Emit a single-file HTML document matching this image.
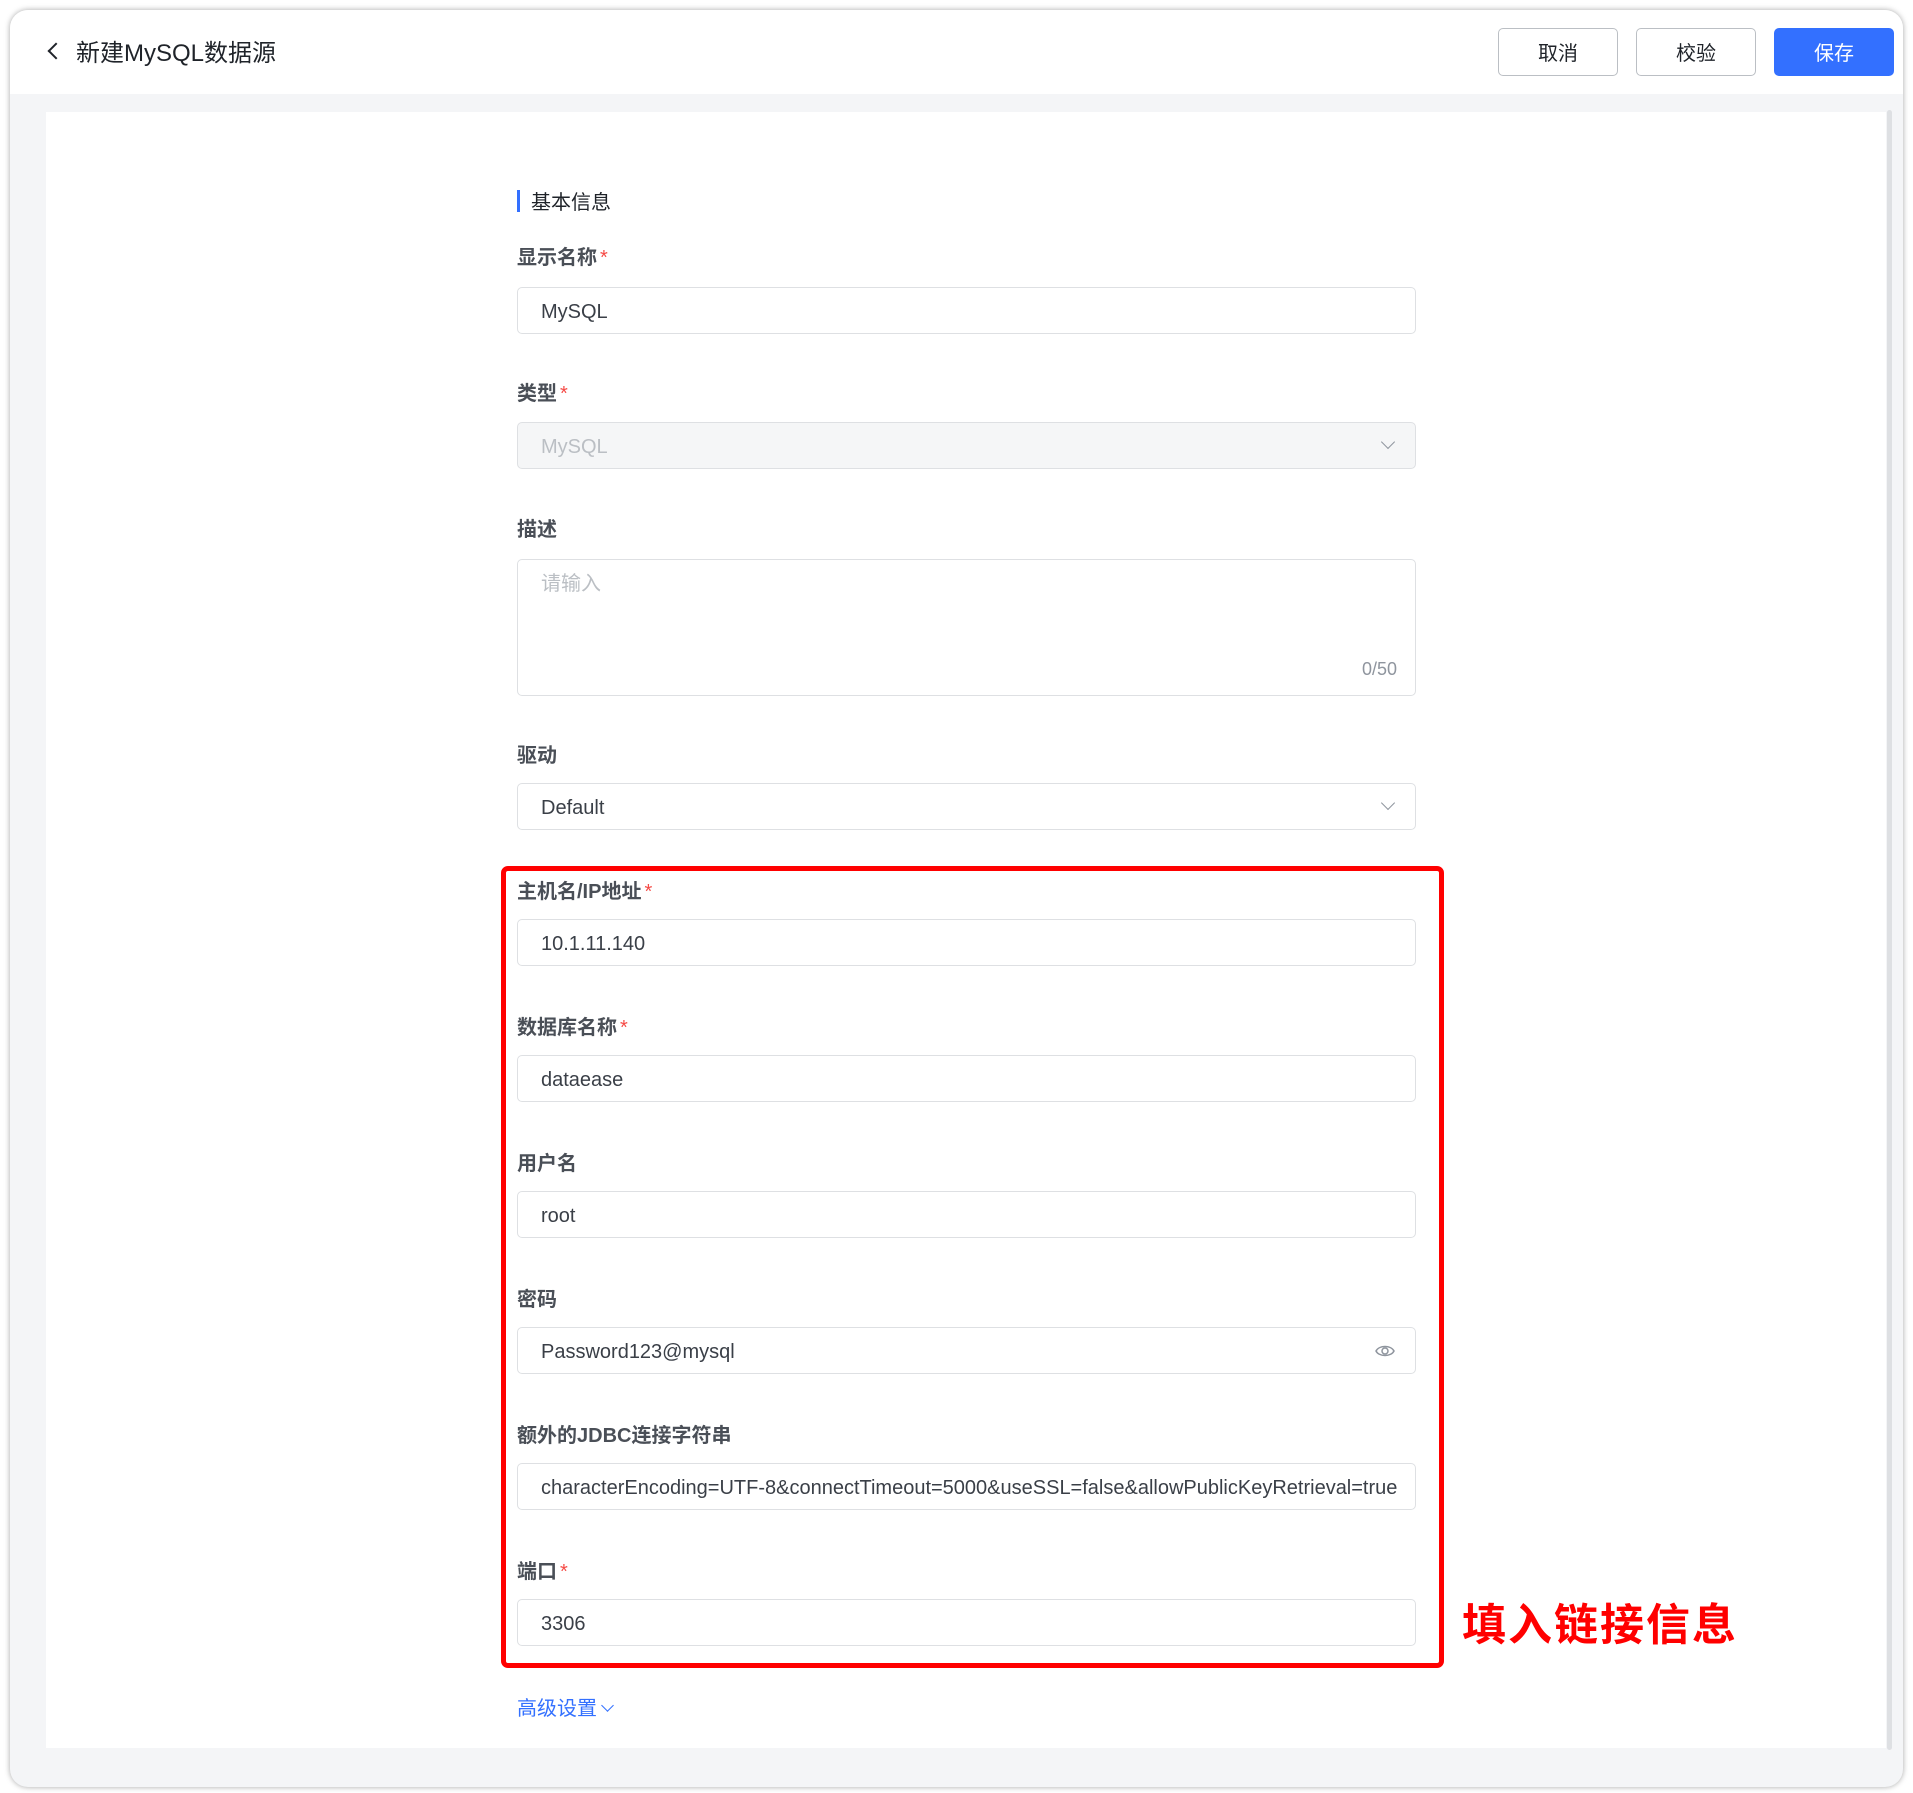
<!DOCTYPE html>
<html><head><meta charset="utf-8"><style>
*{box-sizing:border-box;margin:0;padding:0}
body{width:1913px;height:1793px;background:#fff;font-family:"Liberation Sans","Noto Sans CJK SC",sans-serif;position:relative;overflow:hidden}
.card{position:absolute;left:10px;top:10px;width:1893px;height:1777px;border-radius:18px;background:#f4f5f7;box-shadow:0 0 6px rgba(0,0,0,.35);overflow:hidden}
.hdr{position:absolute;left:0;top:0;width:100%;height:84px;background:#fff}
.title{position:absolute;left:66px;top:23px;font-size:24px;color:#1f2329}
.back{position:absolute;left:40px;top:35px;width:12px;height:12px;border-left:2px solid #1f2329;border-bottom:2px solid #1f2329;transform:rotate(45deg)}
.btn{position:absolute;top:18px;width:120px;height:48px;border:1px solid #bbbfc4;border-radius:5px;background:#fff;font-size:20px;color:#1f2329;text-align:center;line-height:50px}
.btn.p{background:#3370ff;border-color:#3370ff;color:#fff}
.panel{position:absolute;left:36px;top:102px;width:1840px;height:1636px;background:#fff}
.sb{position:absolute;left:1877px;top:100px;width:5px;height:1640px;background:#dee0e3;border-radius:3px}
.a{position:absolute}
.lbl{position:absolute;left:517px;font-size:20px;font-weight:bold;color:#4a4f57}
.lbl i{color:#f54a45;font-style:normal;font-weight:normal;margin-left:3px}
.in{position:absolute;left:517px;width:899px;height:47px;border:1px solid #dee0e3;border-radius:5px;background:#fff;font-size:20px;color:#3a3f47;padding-left:23px;padding-top:2px;line-height:45px;white-space:nowrap;overflow:hidden}
.dis{background:#f5f6f7;color:#bbbfc4}
.chev{position:absolute;right:22px;top:14px;width:10px;height:10px;border-right:1.5px solid #8f959e;border-bottom:1.5px solid #8f959e;transform:rotate(45deg)}
</style></head><body>
<div class="card">
 <div class="hdr">
  <div class="back"></div>
  <div class="title">新建MySQL数据源</div>
  <div class="btn" style="left:1488px">取消</div>
  <div class="btn" style="left:1626px">校验</div>
  <div class="btn p" style="left:1764px">保存</div>
 </div>
 <div class="panel"></div>
 <div class="sb"></div>
</div>
<div class="a" style="left:517px;top:190px;width:3px;height:22px;background:#3370ff"></div>
<div class="a" style="left:531px;top:186px;font-size:20px;color:#1f2329">基本信息</div>

<div class="lbl" style="top:241px">显示名称<i>*</i></div>
<div class="in" style="top:287px">MySQL</div>

<div class="lbl" style="top:377px">类型<i>*</i></div>
<div class="in dis" style="top:422px">MySQL<div class="chev"></div></div>

<div class="lbl" style="top:513px">描述</div>
<div class="in" style="top:559px;height:137px;line-height:45px;color:#bbbfc4">请输入<div class="a" style="right:18px;top:98px;line-height:22px;font-size:18px;color:#8f959e">0/50</div></div>

<div class="lbl" style="top:739px">驱动</div>
<div class="in" style="top:783px">Default<div class="chev"></div></div>

<div class="a" style="left:501px;top:866px;width:943px;height:802px;border:5px solid #ff0000;border-radius:7px"></div>

<div class="lbl" style="top:875px">主机名/IP地址<i>*</i></div>
<div class="in" style="top:919px">10.1.11.140</div>

<div class="lbl" style="top:1011px">数据库名称<i>*</i></div>
<div class="in" style="top:1055px">dataease</div>

<div class="lbl" style="top:1147px">用户名</div>
<div class="in" style="top:1191px">root</div>

<div class="lbl" style="top:1283px">密码</div>
<div class="in" style="top:1327px">Password123@mysql
 <svg class="a" style="right:20px;top:14px" width="20" height="18" viewBox="0 0 20 18"><path d="M1 9C4 3 16 3 19 9C16 15 4 15 1 9Z" fill="none" stroke="#8f959e" stroke-width="1.5"/><circle cx="10" cy="9" r="3" fill="none" stroke="#8f959e" stroke-width="1.5"/></svg>
</div>

<div class="lbl" style="top:1419px">额外的JDBC连接字符串</div>
<div class="in" style="top:1463px;padding-right:20px;text-overflow:clip">characterEncoding=UTF-8&amp;connectTimeout=5000&amp;useSSL=false&amp;allowPublicKeyRetrieval=true</div>

<div class="lbl" style="top:1555px">端口<i>*</i></div>
<div class="in" style="top:1599px">3306</div>

<div class="a" style="left:1462px;top:1589px;font-size:44px;font-weight:bold;color:#ff0000;letter-spacing:2px">填入链接信息</div>

<div class="a" style="left:517px;top:1692px;font-size:20px;color:#3370ff">高级设置<span style="display:inline-block;width:9px;height:9px;border-right:1.5px solid #3370ff;border-bottom:1.5px solid #3370ff;transform:rotate(45deg);margin-left:6px;position:relative;top:-5px"></span></div>
</body></html>
